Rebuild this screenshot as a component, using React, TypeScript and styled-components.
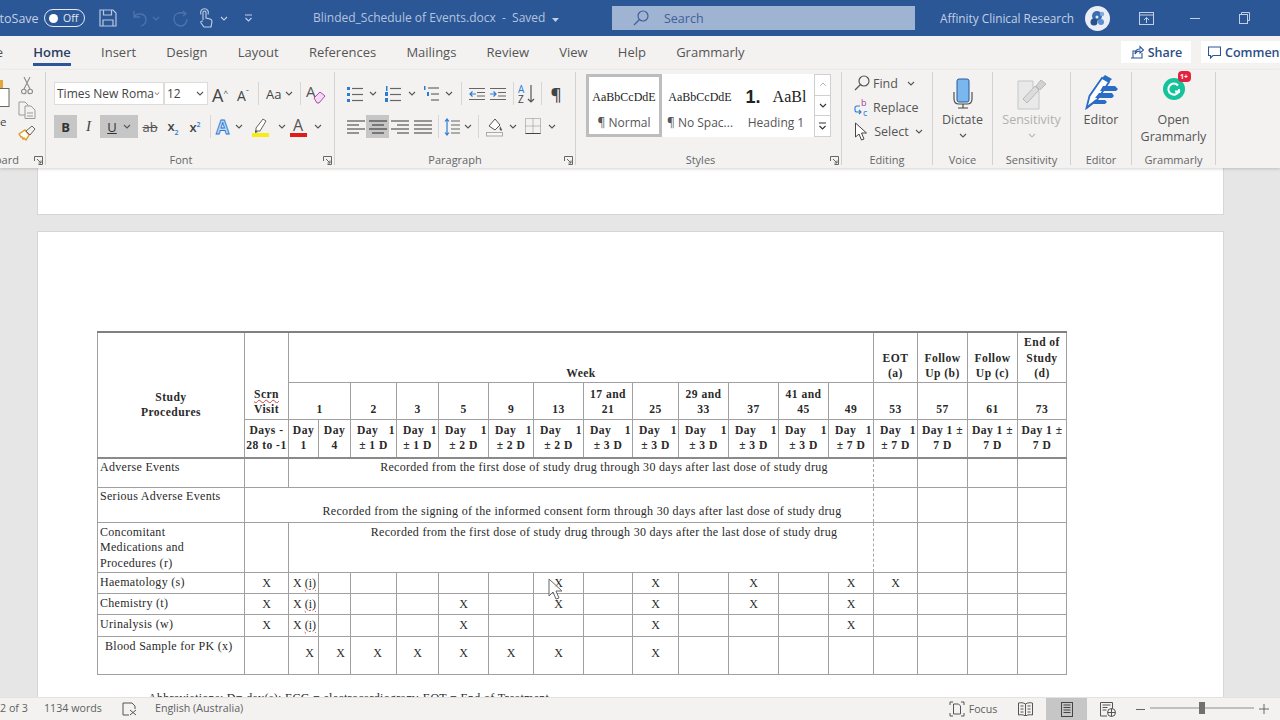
import styled, { createGlobalStyle } from "styled-components";

const ui = `"Open Sans", "Noto Sans", sans-serif`;
const serif = `"Liberation Serif", serif`;

const Global = createGlobalStyle`
  html, body { margin: 0; padding: 0; background: #e6e6e6; }
  #root { width: 1280px; height: 720px; overflow: hidden; }
`;

const Shell = styled.div`
  width: 1280px;
  height: 720px;
  display: flex;
  flex-direction: column;
  overflow: hidden;
  font-family: ${ui};
`;

/* title bar */
const TitleBar = styled.div`
  height: 36px;
  flex: none;
  background: #2b5797;
  color: #c3d0e4;
  display: flex;
  align-items: center;
  font-size: 12.5px;
`;
const AutoSave = styled.span`
  margin-left: -16px;
  width: 60px;
  flex: none;
`;
const Toggle = styled.div`
  width: 41px;
  height: 18px;
  box-sizing: border-box;
  border: 1px solid #e4eaf4;
  border-radius: 10px;
  display: flex;
  align-items: center;
  gap: 5px;
  padding-left: 4px;
  font-size: 10.5px;
  color: #e4eaf4;
  flex: none;
  &::before {
    content: "";
    width: 9px;
    height: 9px;
    border-radius: 50%;
    background: #fff;
  }
`;
const Qat = styled.div<{ $w: number }>`
  width: ${(p) => p.$w}px;
  flex: none;
  display: flex;
  justify-content: center;
  align-items: center;
`;
const DocTitle = styled.div`
  width: 299px;
  flex: none;
  font-size: 12px;
  color: #b4c4dc;
  white-space: pre;
  padding-bottom: 2px;
`;
const SearchBox = styled.div`
  width: 303px;
  height: 24px;
  flex: none;
  background: #9fb3d2;
  display: flex;
  align-items: center;
  gap: 15px;
  padding-left: 21px;
  box-sizing: border-box;
  color: #3f6199;
  font-size: 12.5px;
`;
const Account = styled.div`
  margin-left: 25px;
  width: 145px;
  flex: none;
  font-size: 11.8px;
  color: #c3d0e4;
  white-space: nowrap;
`;

/* tabs */
const TabRow = styled.div`
  height: 34px;
  flex: none;
  box-sizing: border-box;
  padding-bottom: 2px;
  background: #f3f2f1;
  display: flex;
  align-items: center;
`;
const Tabs = styled.div`
  display: flex;
  gap: 30.2px;
  margin-left: -17.5px;
  width: 1128.5px;
  flex: none;
`;
const Tab = styled.div<{ $on?: boolean }>`
  position: relative;
  font-size: 13px;
  line-height: 20px;
  color: ${(p) => (p.$on ? "#2b3f63" : "#555")};
  font-weight: ${(p) => (p.$on ? 600 : 400)};
  &::after {
    content: "";
    display: ${(p) => (p.$on ? "block" : "none")};
    position: absolute;
    left: 0;
    right: 0;
    bottom: -4px;
    height: 3px;
    background: #2b579a;
  }
`;
const ActionBtn = styled.div<{ $w: number }>`
  width: ${(p) => p.$w}px;
  height: 22px;
  flex: none;
  margin-left: 10px;
  background: #fff;
  display: flex;
  align-items: center;
  justify-content: center;
  gap: 4px;
  font-size: 12.5px;
  font-weight: 600;
  color: #2b4f86;
  white-space: nowrap;
  overflow: hidden;
`;
const CommentBtn = styled(ActionBtn)`
  justify-content: flex-start;
  padding-left: 7px;
  box-sizing: border-box;
`;

/* ribbon */
const Ribbon = styled.div`
  height: 98px;
  flex: none;
  box-sizing: border-box;
  padding: 2px 0 3px;
  background: #f3f2f1;
  display: flex;
  position: relative;
  z-index: 2;
  box-shadow: 0 1px 3px rgba(0, 0, 0, 0.18);
`;
const Group = styled.div<{ $w: number }>`
  width: ${(p) => p.$w}px;
  flex: none;
  box-sizing: border-box;
  border-right: 1px solid #d2d2d2;
  display: flex;
  flex-direction: column;
  position: relative;
`;
const GroupBody = styled.div`
  flex: 1;
  min-height: 0;
`;
const GroupLabel = styled.div<{ $shift?: number }>`
  height: 10px;
  line-height: 10px;
  font-size: 11px;
  text-align: center;
  color: #666;
  flex: none;
  padding-right: ${(p) => p.$shift ?? 0}px;
`;
const Launcher = styled.div`
  position: absolute;
  right: 2px;
  bottom: 0;
  width: 9px;
  height: 9px;
  line-height: 0;
`;
const Rows = styled.div<{ $left: number }>`
  display: flex;
  flex-direction: column;
  gap: 10px;
  padding: 10px 0 0 ${(p) => p.$left}px;
`;
const ToolRow = styled.div`
  display: flex;
  height: 23px;
  align-items: center;
`;
const Btn = styled.div<{ $w: number; $on?: boolean }>`
  width: ${(p) => p.$w}px;
  height: 23px;
  flex: none;
  display: flex;
  align-items: center;
  justify-content: center;
  background: ${(p) => (p.$on ? "#c6c6c6" : "transparent")};
  color: #444;
  font-size: 13px;
`;
const Divider = styled.div<{ $w: number }>`
  width: ${(p) => p.$w}px;
  height: 23px;
  flex: none;
  display: flex;
  justify-content: center;
  &::before {
    content: "";
    width: 1px;
    background: #d6d6d6;
  }
`;
const Combo = styled.div<{ $w: number }>`
  width: ${(p) => p.$w}px;
  height: 23px;
  box-sizing: border-box;
  flex: none;
  background: #fff;
  border: 1px solid #dcdcdc;
  display: flex;
  align-items: center;
  justify-content: space-between;
  padding: 0 3px 0 2px;
  font-size: 12px;
  color: #444;
  white-space: nowrap;
  overflow: hidden;
`;
const GlyphBold = styled.span`
  font-family: ${ui};
  font-weight: 700;
  font-size: 13px;
  color: #333;
`;
const GlyphItalic = styled.span`
  font-family: ${serif};
  font-style: italic;
  font-size: 15px;
  color: #444;
`;
const GlyphUnder = styled.span`
  text-decoration: underline;
  font-size: 13px;
  color: #333;
  margin-right: 6px;
`;
const GlyphStrike = styled.span`
  text-decoration: line-through;
  font-size: 13px;
  color: #555;
`;
const GlyphScript = styled.span`
  font-size: 13px;
  font-weight: 600;
  color: #444;
  & sub, & sup {
    font-size: 7px;
    color: #2b7cd3;
  }
`;
const GlyphBig = styled.span<{ $size: number }>`
  font-size: ${(p) => p.$size}px;
  color: #444;
  line-height: 20px;
  position: relative;
  & sup {
    font-size: 8px;
    vertical-align: 6px;
    color: #444;
  }
`;
const Pilcrow = styled.span`
  font-size: 17px;
  font-weight: 600;
  color: #444;
`;

/* clipboard stub */
const ClipColumn = styled.div`
  display: flex;
  height: 100%;
`;
const PasteStub = styled.div`
  width: 13px;
  flex: none;
  padding-top: 8px;
  font-size: 11.5px;
  line-height: 16px;
  color: #444;
  display: flex;
  flex-direction: column;
  gap: 7px;
`;
const ClipTools = styled.div`
  width: 28px;
  display: flex;
  flex-direction: column;
  align-items: center;
  gap: 6px;
  padding-top: 4px;
`;
const ClipLabel = styled.div`
  height: 10px;
  line-height: 10px;
  font-size: 11px;
  color: #666;
  margin-left: -31px;
  white-space: nowrap;
`;

/* styles */
const Gallery = styled.div`
  margin: 2px 0 0 10px;
  width: 245px;
  height: 63px;
  display: flex;
  background: #fff;
  box-sizing: border-box;
`;
const StyleItem = styled.div<{ $w: number; $on?: boolean }>`
  width: ${(p) => p.$w}px;
  flex: none;
  box-sizing: border-box;
  border: 3px solid ${(p) => (p.$on ? "#bdbdbd" : "transparent")};
  display: flex;
  flex-direction: column;
  align-items: center;
  overflow: hidden;
  white-space: nowrap;
`;
const StylePreview = styled.div`
  height: 38px;
  line-height: 40px;
  font-family: ${serif};
  font-size: 12px;
  color: #222;
`;
const HeadingPreview = styled(StylePreview)`
  display: flex;
  gap: 12px;
  font-size: 16px;
  & b {
    font-family: "Liberation Sans", sans-serif;
    font-size: 18px;
  }
`;
const StyleName = styled.div`
  font-size: 12px;
  color: #555;
  line-height: 16px;
`;
const GalleryScroll = styled.div`
  margin-left: auto;
  width: 17px;
  flex: none;
  display: flex;
  flex-direction: column;
  border: 1px solid #d0d0d0;
  box-sizing: border-box;
`;
const ScrollCell = styled.div`
  flex: 1;
  display: flex;
  align-items: center;
  justify-content: center;
  & + & {
    border-top: 1px solid #d0d0d0;
  }
`;

/* editing */
const EditList = styled.div`
  display: flex;
  flex-direction: column;
  padding: 0 0 0 12px;
  margin-top: -1px;
`;
const EditRow = styled.div`
  height: 24px;
  display: flex;
  align-items: center;
  gap: 3px;
  font-size: 12.5px;
  color: #555;
`;

/* large buttons */
const LargeBtn = styled.div<{ $dim?: boolean }>`
  display: flex;
  flex-direction: column;
  align-items: center;
  font-size: 12.5px;
  line-height: 17px;
  color: ${(p) => (p.$dim ? "#b0b0b0" : "#555")};
  text-align: center;
`;
const LargeIcon = styled.div`
  height: 38px;
  display: flex;
  align-items: flex-end;
  margin-bottom: 1px;
`;
const LargeChev = styled.div`
  line-height: 0;
  margin-top: 5px;
`;
const GrammarlyIcon = styled.div`
  position: relative;
  width: 22px;
  height: 22px;
  margin-bottom: 10px;
`;
const Badge = styled.span`
  position: absolute;
  top: -7px;
  right: -6px;
  width: 13px;
  height: 11px;
  border-radius: 4px;
  background: #e0243f;
  color: #fff;
  font-size: 7px;
  font-weight: 700;
  line-height: 11px;
  text-align: center;
`;

/* document */
const DocArea = styled.div`
  flex: 1;
  min-height: 0;
  overflow: hidden;
  background: #e6e6e6;
`;
const PageTail = styled.div`
  margin-left: 37px;
  width: 1187px;
  height: 47px;
  box-sizing: border-box;
  background: #fff;
  border: 1px solid #d6d6d6;
  border-top: none;
`;
const Page = styled.div`
  margin: 16px 0 0 37px;
  width: 1187px;
  height: 700px;
  box-sizing: border-box;
  padding: 99px 0 0 59px;
  background: #fff;
  border: 1px solid #d6d6d6;
  font-family: ${serif};
  color: #2a2a2a;
`;
const TableWrap = styled.div`
  position: relative;
  width: 969px;
`;
const Schedule = styled.table`
  width: 969px;
  table-layout: fixed;
  border-collapse: collapse;
  font-size: 12px;
  line-height: 15.5px;
  letter-spacing: 0.3px;
  border: 1px solid #969696;
  border-top: 2px solid #808080;
`;
const Row = styled.tr<{ $h: number }>`
  height: ${(p) => p.$h}px;
`;
const HeadCell = styled.th<{ $v?: string; $pb?: number; $pt?: number; $thick?: boolean }>`
  border: 1px solid #a0a0a0;
  padding: ${(p) => p.$pt ?? 0}px 1px ${(p) => p.$pb ?? 0}px;
  font-weight: 700;
  font-size: 11.6px;
  text-align: center;
  vertical-align: ${(p) => p.$v ?? "bottom"};
  letter-spacing: 0.45px;
  border-bottom: ${(p) => (p.$thick ? "2px solid #8a8a8a" : "1px solid #a0a0a0")};
`;
const DaySplit = styled.div`
  display: flex;
  justify-content: space-between;
  padding: 0 0 0 5px;
`;
const TextCell = styled.td<{ $pad?: number; $top?: number; $afterDash?: boolean }>`
  border: 1px solid #a0a0a0;
  ${(p) => (p.$afterDash ? "border-left: none;" : "")}
  padding: ${(p) => p.$top ?? 1}px 2px 0 ${(p) => p.$pad ?? 2}px;
  vertical-align: top;
`;
const SpanCell = styled.td<{ $v?: string; $pb?: number; $top?: number }>`
  border: 1px solid #a0a0a0;
  border-right: 1px dashed #a8a8a8;
  padding: ${(p) => p.$top ?? 1}px 0 ${(p) => p.$pb ?? 0}px 46px;
  text-align: center;
  vertical-align: ${(p) => p.$v ?? "top"};
`;
const Mark = styled.td<{ $shift?: number; $left?: boolean; $tall?: boolean }>`
  border: 1px solid #a0a0a0;
  padding: ${(p) => (p.$tall ? "0 0 2px" : "2px 0 0")} ${(p) => p.$shift ?? 0}px;
  padding-right: 0;
  text-align: ${(p) => (p.$left ? "left" : "center")};
  vertical-align: middle;
  white-space: nowrap;
  letter-spacing: 0;
`;
const Squiggle = styled.span`
  text-decoration: underline wavy #d04040;
  text-decoration-thickness: 1px;
`;
const Pointer = styled.svg`
  position: absolute;
  left: 451px;
  top: 247px;
`;
const Abbrev = styled.p`
  margin: 16px 0 0 51px;
  font-size: 12px;
  letter-spacing: 0.3px;
  white-space: nowrap;
`;

/* status bar */
const StatusBar = styled.div`
  height: 23px;
  flex: none;
  background: #f3f2f1;
  border-top: 1px solid #e2e2e2;
  box-sizing: border-box;
  position: relative;
  z-index: 2;
  display: flex;
  align-items: center;
  padding-bottom: 2px;
  font-size: 10.7px;
  color: #5f5f5f;
`;
const StatusText = styled.span<{ $w: number }>`
  width: ${(p) => p.$w}px;
  flex: none;
  white-space: nowrap;
`;
const StatusIcon = styled.div<{ $w: number; $on?: boolean }>`
  width: ${(p) => p.$w}px;
  height: 22px;
  flex: none;
  margin-bottom: -2px;
  display: flex;
  align-items: center;
  justify-content: center;
  gap: 4px;
  background: ${(p) => (p.$on ? "#c6c6c6" : "transparent")};
`;
const SliderTrack = styled.div`
  width: 104px;
  height: 2px;
  flex: none;
  background: #c0c0c0;
  position: relative;
  margin: 0 5px;
`;
const SliderThumb = styled.div`
  position: absolute;
  left: 49px;
  top: -5px;
  width: 6px;
  height: 12px;
  background: #707070;
`;

/* icons */
const Chev = ({ c = "#555" }: { c?: string }) => (
  <svg width="8" height="5" viewBox="0 0 8 5" fill="none">
    <path d="M1 1l3 3 3-3" stroke={c} strokeWidth="1.1" />
  </svg>
);

const Lines = ({ rows, c = "#555" }: { rows: [number, number, number][]; c?: string }) => (
  <svg width="20" height="18" viewBox="0 0 20 18" fill="none" stroke={c} strokeWidth="1.2">
    {rows.map(([a, b, y], i) => (
      <path key={i} d={`M${a} ${y}H${b}`} />
    ))}
  </svg>
);

const ListIcon = ({ kind }: { kind: "bullet" | "number" | "multi" }) => (
  <svg width="18" height="18" viewBox="0 0 18 18" fill="none">
    {kind === "bullet" && (
      <g fill="#2b7cd3">
        <rect x="1" y="2" width="3" height="3" />
        <rect x="1" y="8" width="3" height="3" />
        <rect x="1" y="14" width="3" height="3" />
      </g>
    )}
    {kind === "number" && (
      <g fill="#2b7cd3">
        <rect x="2" y="1" width="1.5" height="5" />
        <rect x="1" y="7" width="3" height="4" />
        <rect x="1" y="13" width="3" height="4" />
      </g>
    )}
    {kind === "multi" && (
      <g fill="#2b7cd3">
        <rect x="2" y="1" width="1.5" height="4" />
        <rect x="5" y="7" width="2" height="4" />
      </g>
    )}
    <g stroke="#666" strokeWidth="1.2">
      <path d={kind === "multi" ? "M6 3h11" : "M6 3.5h11"} />
      <path d={kind === "multi" ? "M9 9h8" : "M6 9.5h11"} />
      <path d={kind === "multi" ? "M9 15h8" : "M6 15.5h11"} />
    </g>
  </svg>
);

const IndentIcon = ({ out }: { out?: boolean }) => (
  <svg width="17" height="14" viewBox="0 0 17 14" fill="none">
    <g stroke="#666" strokeWidth="1.1">
      <path d="M0 1.5h16M8 5.5h8M8 9h8M0 12.5h16" />
    </g>
    <path d={out ? "M7 7H1M3.5 4.5L1 7l2.5 2.5" : "M0 7h6M3.5 4.5L6 7 3.5 9.5"} stroke="#2b7cd3" strokeWidth="1.2" />
  </svg>
);

const Launch = () => (
  <svg width="9" height="9" viewBox="0 0 9 9" fill="none" stroke="#666">
    <path d="M.5 5V.5H8.5V8.5H4.5" />
    <path d="M3 3l4 4M7 4.5V7H4.5" />
  </svg>
);

const SaveIcon = () => (
  <svg width="18" height="18" viewBox="0 0 18 18" fill="none" stroke="#b9c8e0" strokeWidth="1.2">
    <path d="M1 1h13l3 3v13H1z" />
    <path d="M4.5 1v5h8V1M4 17v-6h10v6" />
  </svg>
);
const UndoIcon = () => (
  <svg width="18" height="18" viewBox="0 0 18 18" fill="none" stroke="#4f73ab" strokeWidth="1.3">
    <path d="M3 2v6h6M3 8c3-5 12-4 12 3 0 3-2 5-5 6" />
  </svg>
);
const RedoIcon = () => (
  <svg width="17" height="18" viewBox="0 0 17 18" fill="none" stroke="#4f73ab" strokeWidth="1.3">
    <path d="M11 2l3 3-3 2" />
    <path d="M13 5C7 2 2 5 2 10s4 7 7 7 6-3 6-7" />
  </svg>
);
const TouchIcon = () => (
  <svg width="14" height="20" viewBox="0 0 14 20" fill="none" stroke="#c3d0e4" strokeWidth="1.1">
    <path d="M4 12V4.5a1.5 1.5 0 013 0V10l4 1c1.3.4 2 1 2 2.4L12 19H5l-3-4c-.8-1.4.6-2.6 2-1.6" />
    <path d="M2 6.5C.6 3 3 .8 5.5.8S10.400 3 9 6.500" />
  </svg>
);
const QatMore = ({ c = "#c3d0e4" }: { c?: string }) => (
  <svg width="9" height="8" viewBox="0 0 9 8" fill="none" stroke={c} strokeWidth="1.1">
    <path d="M1 1h7M1.500 4l3 3 3-3" />
  </svg>
);
const Caret = () => (
  <svg width="7" height="4" viewBox="0 0 7 4">
    <path d="M0 0h7L3.500 4z" fill="#c3d0e4" />
  </svg>
);
const Magnifier = ({ c, s = 16 }: { c: string; s?: number }) => (
  <svg width={s} height={s} viewBox="0 0 16 16" fill="none" stroke={c} strokeWidth="1.2">
    <circle cx="10" cy="6" r="5" />
    <path d="M6.500 9.500L1 15" />
  </svg>
);
const Avatar = () => (
  <svg width="25" height="25" viewBox="0 0 25 25">
    <circle cx="12.500" cy="12.500" r="12.500" fill="#e9eef6" />
    <circle cx="12" cy="10" r="5" fill="#3a6db0" />
    <circle cx="9" cy="16" r="3.500" fill="#27508f" />
    <circle cx="16" cy="16" r="3" fill="#5b8fce" />
    <circle cx="17" cy="8" r="2.200" fill="#7fa9dc" />
    <circle cx="12" cy="11" r="1.500" fill="#dfe8f4" />
  </svg>
);
const DisplayIcon = () => (
  <svg width="15" height="13" viewBox="0 0 15 13" fill="none" stroke="#c3d0e4">
    <rect x=".5" y=".5" width="14" height="12" />
    <path d="M.5 3h14M7.500 11V5.500M5 8l2.500-2.500L10 8" />
  </svg>
);
const RestoreIcon = () => (
  <svg width="11" height="12" viewBox="0 0 11 12" fill="none" stroke="#c3d0e4">
    <rect x=".5" y="2.500" width="8" height="9" />
    <path d="M2.500 2.500V.5h8v8H8.500" />
  </svg>
);
const ShareIcon = () => (
  <svg width="14" height="14" viewBox="0 0 14 14" fill="none" stroke="#2b579a" strokeWidth="1.1">
    <path d="M3 13V6h3M1 13h11V8" />
    <path d="M5 9c0-4 3-5 5-5V1.500L13.500 5 10 8V6c-2 0-4 1-5 3z" />
  </svg>
);
const CommentIcon = () => (
  <svg width="13" height="13" viewBox="0 0 13 13" fill="none" stroke="#2b579a" strokeWidth="1.1">
    <path d="M.5 1h12v8.500H5L2.500 12V9.500h-2z" />
  </svg>
);

const PasteIcon = () => (
  <svg width="10" height="27" viewBox="0 0 10 27">
    <rect x="0" y="0" width="3" height="8" fill="#e0a93c" />
    <rect x="-2" y="8.500" width="11" height="18" fill="#fff" stroke="#666" />
  </svg>
);
const CutIcon = () => (
  <svg width="12" height="19" viewBox="0 0 12 19" fill="none" stroke="#8a8a8a" strokeWidth="1.1">
    <path d="M3 1l6 12M9 1L3 13" />
    <circle cx="2.800" cy="15.500" r="2.300" />
    <circle cx="9.200" cy="15.500" r="2.300" />
  </svg>
);
const CopyIcon = () => (
  <svg width="18" height="18" viewBox="0 0 18 18" fill="none" stroke="#9a9a9a">
    <path d="M1 1h6l3 3v10H1z" />
    <path d="M7 5h6l4 4v8.500H7z" fill="#f3f2f1" />
    <path d="M9 12h6M9 15h6" />
  </svg>
);
const PainterIcon = () => (
  <svg width="18" height="16" viewBox="0 0 18 16">
    <path d="M1 9l6-4 4 5-3 5-2-2-1 1-1-2H3z" fill="#fff" stroke="#e39a25" strokeWidth="1.400" />
    <path d="M8 6l6-5 3 3-5 6z" fill="#f3f2f1" stroke="#666" />
  </svg>
);
const EraserIcon = () => (
  <svg width="22" height="22" viewBox="0 0 22 22" fill="none">
    <text x="1" y="14" fontFamily="Open Sans" fontSize="15" fill="#555">A</text>
    <path d="M9 15l6-6 5 4-6 7h-2z" fill="#f2dcf2" stroke="#b545b5" />
  </svg>
);
const TextEffect = () => (
  <svg width="18" height="18" viewBox="0 0 18 18">
    <text x="1" y="16" fontFamily="Open Sans" fontWeight="700" fontSize="19" fill="#bcd8f4" stroke="#2b7cd3" strokeWidth=".9">A</text>
  </svg>
);
const Highlighter = () => (
  <svg width="18" height="20" viewBox="0 0 18 20">
    <path d="M4 11l7-9 3 2-6 10H4z" fill="#fff" stroke="#666" />
    <path d="M3 13l3 2-3 1z" fill="#555" />
    <rect x="0" y="16" width="17" height="4" fill="#f7ec13" />
  </svg>
);
const FontColor = () => (
  <svg width="18" height="20" viewBox="0 0 18 20">
    <text x="3" y="14" fontFamily="Open Sans" fontSize="16" fill="#555">A</text>
    <rect x="0" y="16" width="17" height="4" fill="#e01b1b" />
  </svg>
);
const SortIcon = () => (
  <svg width="18" height="20" viewBox="0 0 18 20" fill="none">
    <text x="0" y="9" fontFamily="Open Sans" fontSize="10" fill="#2b7cd3">A</text>
    <text x="0" y="19" fontFamily="Open Sans" fontSize="10" fill="#444">Z</text>
    <path d="M13 1v17M10 15l3 3 3-3" stroke="#555" strokeWidth="1.2" />
  </svg>
);
const SpacingIcon = () => (
  <svg width="16" height="18" viewBox="0 0 16 18" fill="none">
    <path d="M7 3h9M7 7h9M7 11h9M7 15h9" stroke="#666" strokeWidth="1.1" />
    <path d="M3 1v16M1 3.500L3 1l2 2.500M1 14.500L3 17l2-2.500" stroke="#2b7cd3" strokeWidth="1.2" />
  </svg>
);
const ShadingIcon = () => (
  <svg width="18" height="20" viewBox="0 0 18 20" fill="none">
    <path d="M3 9l6-7 5 6-5 5z" stroke="#555" fill="#fff" />
    <path d="M14 9c1 2 2 3 2 4s-1 1-2 0 0-2 0-4z" fill="#555" />
    <rect x=".5" y="15.500" width="16" height="3.500" fill="#f6f6f6" stroke="#aaa" />
  </svg>
);
const BordersIcon = () => (
  <svg width="16" height="17" viewBox="0 0 16 17" fill="none" stroke="#888" strokeDasharray="1 1">
    <rect x=".5" y=".5" width="15" height="15" />
    <path d="M8 .5v15M.5 8h15" />
    <path d="M.5 15.500h15" stroke="#444" strokeDasharray="none" />
  </svg>
);
const ReplaceIcon = () => (
  <svg width="16" height="19" viewBox="0 0 16 19" fill="none">
    <text x="7" y="8" fontFamily="Open Sans" fontSize="9" fill="#a33ea3">b</text>
    <text x="9" y="18" fontFamily="Open Sans" fontSize="9" fill="#2b7cd3">c</text>
    <path d="M6 8H3a2 2 0 00-2 2v2a2 2 0 002 2h4M5 12l2 2-2 2" stroke="#2b7cd3" strokeWidth="1.100" />
  </svg>
);
const ArrowIcon = () => (
  <svg width="14" height="19" viewBox="0 0 14 19" fill="#fff" stroke="#444">
    <path d="M1.500 1v14l3.500-3 2.500 6 2.500-1-2.500-6h5z" />
  </svg>
);
const MicIcon = () => (
  <svg width="20" height="32" viewBox="0 0 20 32" fill="none">
    <rect x="4" y="1" width="12" height="23" rx="2" fill="#7ab7ee" stroke="#2b579a" />
    <path d="M1 14v7c0 3 2 5 5 5h8c3 0 5-2 5-5v-7M10 26v4M5 30h10" stroke="#444" strokeWidth="1.100" />
  </svg>
);
const SensitivityIcon = () => (
  <svg width="30" height="32" viewBox="0 0 30 32" fill="none">
    <path d="M1 3h15v7l6 3v18H1z" fill="#e9e9e9" stroke="#c6c6c6" />
    <path d="M6 21L18 8l4 4-12 13z" fill="#dcdcdc" stroke="#b8b8b8" />
    <path d="M19 8l5-6 5 4-6 6z" fill="#d2d2d2" stroke="#b8b8b8" />
  </svg>
);
const PenIcon = () => (
  <svg width="33" height="36" viewBox="0 0 33 36" fill="none">
    <path d="M1.500 34l3-12L17 4l7 4-12 18z" fill="#fff" stroke="#2b6cc4" strokeWidth="1.800" />
    <path d="M17 4l3-3 7 4-3 3z" fill="#2b6cc4" />
    <path d="M1.500 34l10-8" stroke="#2b6cc4" strokeWidth="1.800" />
    <path d="M18 12h12l3 3-2 2H15zM14 19h13l2 3-2 2H10zM11 26h9l2 2-2 2H7z" fill="#2b6cc4" />
  </svg>
);
const GrammarlyCircle = () => (
  <svg width="22" height="22" viewBox="0 0 22 22" fill="none">
    <circle cx="11" cy="11" r="11" fill="#15c39a" />
    <path d="M15 7.500a5.500 5.500 0 10.800 6H12" stroke="#fff" strokeWidth="2" />
    <path d="M16 15v-4" stroke="#fff" strokeWidth="2" />
  </svg>
);
const ProofIcon = () => (
  <svg width="15" height="14" viewBox="0 0 15 14" fill="none" stroke="#555">
    <path d="M7 13H1V1h9l3 3v3" />
    <path d="M8 8l6 5M14 8l-6 5" />
  </svg>
);
const FocusIcon = () => (
  <svg width="16" height="16" viewBox="0 0 16 16" fill="none" stroke="#555">
    <path d="M1 4V1h3M12 1h3v3M15 12v3h-3M4 15H1v-3" />
    <path d="M4.500 3h5l2 2v8h-7z" />
  </svg>
);
const ReadIcon = () => (
  <svg width="15" height="14" viewBox="0 0 15 14" fill="none" stroke="#555">
    <path d="M7.500 2C5 .5 3 .5.500 1v12c2.500-.5 4.500-.5 7 1 2.500-1.500 4.500-1.500 7-1V1c-2.500-.5-4.500-.5-7 1zM7.500 2v12" />
    <path d="M2.500 4h3M2.500 7h3M2.500 10h3M9.500 4h3M9.500 7h3M9.500 10h3" />
  </svg>
);
const PrintIcon = () => (
  <svg width="12" height="15" viewBox="0 0 12 15" fill="none" stroke="#444">
    <rect x=".5" y=".5" width="11" height="14" />
    <path d="M2.500 3h7M2.500 5.500h7M2.500 8h7M2.500 10.500h7" />
  </svg>
);
const WebIcon = () => (
  <svg width="16" height="15" viewBox="0 0 16 15" fill="none" stroke="#555">
    <path d="M7 14H.5V.5h12V7" />
    <path d="M2.500 3h8M2.500 5.500h5M2.500 8h4" />
    <circle cx="11.500" cy="10.500" r="4" fill="#f3f2f1" />
    <path d="M7.500 10.500h8M11.500 6.500v8" />
  </svg>
);

const columns = [147, 44, 30, 32, 46, 42, 50, 45, 50, 49, 46, 50, 50, 50, 45, 44, 50, 50, 49];

type MarkRow = {
  name: string;
  pad?: number;
  h: number;
  x: Record<number, number>;
  withI?: boolean;
  screening?: boolean;
};

const markRows: MarkRow[] = [
  { name: "Haematology (s)", h: 21, screening: true, withI: true, x: { 6: 0, 8: 0, 10: 0, 12: 0, 13: 0 } },
  { name: "Chemistry (t)", h: 21, screening: true, withI: true, x: { 4: 0, 6: 0, 8: 0, 10: 0, 12: 0 } },
  { name: "Urinalysis (w)", h: 22, screening: true, withI: true, x: { 4: 0, 8: 0, 12: 0 } },
  {
    name: "Blood Sample for PK (x)",
    pad: 7,
    h: 38,
    x: { 0: 12, 1: 12, 2: 8, 3: 0, 4: 0, 5: 0, 6: 0, 8: 0 },
  },
];

function DayHead({ value }: { value: string }) {
  return (
    <HeadCell $v="middle" $thick>
      <DaySplit>
        <span>Day</span>
        <span>1</span>
      </DaySplit>
      {value}
    </HeadCell>
  );
}

function TrailingCells() {
  return (
    <>
      <TextCell $afterDash />
      <TextCell />
      <TextCell />
      <TextCell />
    </>
  );
}

function TitleArea() {
  return (
    <TitleBar>
      <AutoSave>AutoSave</AutoSave>
      <Toggle>Off</Toggle>
      <Qat $w={14} />
      <Qat $w={18}><SaveIcon /></Qat>
      <Qat $w={14} />
      <Qat $w={18}><UndoIcon /></Qat>
      <Qat $w={14}><Chev c="#4f73ab" /></Qat>
      <Qat $w={8} />
      <Qat $w={18}><RedoIcon /></Qat>
      <Qat $w={10} />
      <Qat $w={14}><TouchIcon /></Qat>
      <Qat $w={22}><Chev c="#c3d0e4" /></Qat>
      <Qat $w={26}><QatMore /></Qat>
      <Qat $w={52} />
      <DocTitle>
        Blinded_Schedule of Events.docx  -  Saved  <Caret />
      </DocTitle>
      <SearchBox>
        <Magnifier c="#3f6199" />
        Search
      </SearchBox>
      <Account>Affinity Clinical Research</Account>
      <Avatar />
      <Qat $w={29} />
      <DisplayIcon />
      <Qat $w={36} />
      <Qat $w={10}><svg width="10" height="1"><rect width="10" height="1" fill="#c3d0e4" /></svg></Qat>
      <Qat $w={39} />
      <RestoreIcon />
    </TitleBar>
  );
}

function TabArea() {
  const tabs = ["File", "Home", "Insert", "Design", "Layout", "References", "Mailings", "Review", "View", "Help", "Grammarly"];
  return (
    <TabRow>
      <Tabs>
        {tabs.map((t) => (
          <Tab key={t} $on={t === "Home"}>{t}</Tab>
        ))}
      </Tabs>
      <ActionBtn $w={70}><ShareIcon />Share</ActionBtn>
      <CommentBtn $w={90}><CommentIcon />Comments</CommentBtn>
    </TabRow>
  );
}

function RibbonArea() {
  return (
    <Ribbon>
      <Group $w={46}>
        <GroupBody>
          <ClipColumn>
            <PasteStub>
              <PasteIcon />
              <span>e</span>
            </PasteStub>
            <ClipTools>
              <CutIcon />
              <CopyIcon />
              <PainterIcon />
            </ClipTools>
          </ClipColumn>
        </GroupBody>
        <ClipLabel>Clipboard</ClipLabel>
        <Launcher><Launch /></Launcher>
      </Group>

      <Group $w={289}>
        <GroupBody>
          <Rows $left={8}>
            <ToolRow>
              <Combo $w={110}>Times New Roma<Chev /></Combo>
              <Combo $w={44}>12<Chev /></Combo>
              <Btn $w={24}><GlyphBig $size={18}>A<sup>^</sup></GlyphBig></Btn>
              <Btn $w={22}><GlyphBig $size={14}>A<sup>ˇ</sup></GlyphBig></Btn>
              <Divider $w={9} />
              <Btn $w={33}>Aa&nbsp;<Chev /></Btn>
              <Divider $w={9} />
              <Btn $w={22}><EraserIcon /></Btn>
            </ToolRow>
            <ToolRow>
              <Btn $w={23} $on><GlyphBold>B</GlyphBold></Btn>
              <Btn $w={23}><GlyphItalic>I</GlyphItalic></Btn>
              <Btn $w={38} $on><GlyphUnder>U</GlyphUnder><Chev /></Btn>
              <Btn $w={24}><GlyphStrike>ab</GlyphStrike></Btn>
              <Btn $w={22}><GlyphScript>x<sub>2</sub></GlyphScript></Btn>
              <Btn $w={22}><GlyphScript>x<sup>2</sup></GlyphScript></Btn>
              <Divider $w={8} />
              <Btn $w={20}><TextEffect /></Btn>
              <Btn $w={10}><Chev /></Btn>
              <Btn $w={34}><Highlighter /></Btn>
              <Btn $w={8}><Chev /></Btn>
              <Btn $w={26}><FontColor /></Btn>
              <Btn $w={12}><Chev /></Btn>
            </ToolRow>
          </Rows>
        </GroupBody>
        <GroupLabel $shift={18}>Font</GroupLabel>
        <Launcher><Launch /></Launcher>
      </Group>

      <Group $w={241}>
        <GroupBody>
          <Rows $left={10}>
            <ToolRow>
              <Btn $w={20}><ListIcon kind="bullet" /></Btn>
              <Btn $w={16}><Chev /></Btn>
              <Btn $w={24}><ListIcon kind="number" /></Btn>
              <Btn $w={14}><Chev /></Btn>
              <Btn $w={24}><ListIcon kind="multi" /></Btn>
              <Btn $w={12}><Chev /></Btn>
              <Divider $w={12} />
              <Btn $w={20}><IndentIcon out /></Btn>
              <Btn $w={22}><IndentIcon /></Btn>
              <Divider $w={8} />
              <Btn $w={20}><SortIcon /></Btn>
              <Divider $w={8} />
              <Btn $w={22}><Pilcrow>¶</Pilcrow></Btn>
            </ToolRow>
            <ToolRow>
              <Btn $w={21}><Lines rows={[[1, 19, 3], [1, 13, 7], [1, 19, 11], [1, 13, 15]]} /></Btn>
              <Btn $w={23} $on><Lines rows={[[1, 19, 3], [4, 16, 7], [1, 19, 11], [4, 16, 15]]} c="#444" /></Btn>
              <Btn $w={22}><Lines rows={[[1, 19, 3], [7, 19, 7], [1, 19, 11], [7, 19, 15]]} /></Btn>
              <Btn $w={24}><Lines rows={[[1, 19, 3], [1, 19, 7], [1, 19, 11], [1, 19, 15]]} /></Btn>
              <Divider $w={6} />
              <Btn $w={21}><SpacingIcon /></Btn>
              <Btn $w={11}><Chev /></Btn>
              <Divider $w={10} />
              <Btn $w={23}><ShadingIcon /></Btn>
              <Btn $w={13}><Chev /></Btn>
              <Btn $w={27}><BordersIcon /></Btn>
              <Btn $w={12}><Chev /></Btn>
            </ToolRow>
          </Rows>
        </GroupBody>
        <GroupLabel>Paragraph</GroupLabel>
        <Launcher><Launch /></Launcher>
      </Group>

      <Group $w={266}>
        <GroupBody>
          <Gallery>
            <StyleItem $w={76} $on>
              <StylePreview>AaBbCcDdE</StylePreview>
              <StyleName>¶ Normal</StyleName>
            </StyleItem>
            <StyleItem $w={76}>
              <StylePreview>AaBbCcDdE</StylePreview>
              <StyleName>¶ No Spac...</StyleName>
            </StyleItem>
            <StyleItem $w={76}>
              <HeadingPreview><b>1.</b><span>AaBl</span></HeadingPreview>
              <StyleName>Heading 1</StyleName>
            </StyleItem>
            <GalleryScroll>
              <ScrollCell><svg width="8" height="5"><path d="M1 4l3-3 3 3" fill="none" stroke="#bbb" /></svg></ScrollCell>
              <ScrollCell><Chev c="#333" /></ScrollCell>
              <ScrollCell><QatMore c="#333" /></ScrollCell>
            </GalleryScroll>
          </Gallery>
        </GroupBody>
        <GroupLabel $shift={16}>Styles</GroupLabel>
        <Launcher><Launch /></Launcher>
      </Group>

      <Group $w={91}>
        <GroupBody>
          <EditList>
            <EditRow><Magnifier c="#555" s={16} />Find&nbsp;&nbsp;<Chev /></EditRow>
            <EditRow><ReplaceIcon />Replace</EditRow>
            <EditRow><ArrowIcon />&nbsp;Select&nbsp;<Chev /></EditRow>
          </EditList>
        </GroupBody>
        <GroupLabel>Editing</GroupLabel>
      </Group>

      <Group $w={60}>
        <GroupBody>
          <LargeBtn>
            <LargeIcon><MicIcon /></LargeIcon>
            Dictate
            <LargeChev><Chev /></LargeChev>
          </LargeBtn>
        </GroupBody>
        <GroupLabel>Voice</GroupLabel>
      </Group>

      <Group $w={78}>
        <GroupBody>
          <LargeBtn $dim>
            <LargeIcon><SensitivityIcon /></LargeIcon>
            Sensitivity
            <LargeChev><Chev c="#bbb" /></LargeChev>
          </LargeBtn>
        </GroupBody>
        <GroupLabel>Sensitivity</GroupLabel>
      </Group>

      <Group $w={61}>
        <GroupBody>
          <LargeBtn>
            <LargeIcon><PenIcon /></LargeIcon>
            Editor
          </LargeBtn>
        </GroupBody>
        <GroupLabel>Editor</GroupLabel>
      </Group>

      <Group $w={84}>
        <GroupBody>
          <LargeBtn>
            <LargeIcon>
              <GrammarlyIcon>
                <GrammarlyCircle />
                <Badge>1+</Badge>
              </GrammarlyIcon>
            </LargeIcon>
            Open
            <br />
            Grammarly
          </LargeBtn>
        </GroupBody>
        <GroupLabel>Grammarly</GroupLabel>
      </Group>
    </Ribbon>
  );
}

function ScheduleTable() {
  return (
    <Schedule>
      <colgroup>
        {columns.map((w, i) => (
          <col key={i} width={w} />
        ))}
      </colgroup>
      <thead>
        <Row $h={50}>
          <HeadCell rowSpan={3} $v="middle" $thick $pt={20}>Study<br />Procedures</HeadCell>
          <HeadCell rowSpan={2} $pb={1}><Squiggle>Scrn</Squiggle><br />Visit</HeadCell>
          <HeadCell colSpan={13}>Week</HeadCell>
          <HeadCell>EOT<br />(a)</HeadCell>
          <HeadCell>Follow<br />Up (b)</HeadCell>
          <HeadCell>Follow<br />Up (c)</HeadCell>
          <HeadCell>End of<br />Study<br />(d)</HeadCell>
        </Row>
        <Row $h={37}>
          <HeadCell colSpan={2} $pb={1}>1</HeadCell>
          <HeadCell $pb={1}>2</HeadCell>
          <HeadCell $pb={1}>3</HeadCell>
          <HeadCell $pb={1}>5</HeadCell>
          <HeadCell $pb={1}>9</HeadCell>
          <HeadCell $pb={1}>13</HeadCell>
          <HeadCell $pb={1}>17 and<br />21</HeadCell>
          <HeadCell $pb={1}>25</HeadCell>
          <HeadCell $pb={1}>29 and<br />33</HeadCell>
          <HeadCell $pb={1}>37</HeadCell>
          <HeadCell $pb={1}>41 and<br />45</HeadCell>
          <HeadCell $pb={1}>49</HeadCell>
          <HeadCell $pb={1}>53</HeadCell>
          <HeadCell $pb={1}>57</HeadCell>
          <HeadCell $pb={1}>61</HeadCell>
          <HeadCell $pb={1}>73</HeadCell>
        </Row>
        <Row $h={39}>
          <HeadCell $v="middle" $thick>Days -<br />28 to -1</HeadCell>
          <HeadCell $v="middle" $thick>Day<br />1</HeadCell>
          <HeadCell $v="middle" $thick>Day<br />4</HeadCell>
          <DayHead value="± 1 D" />
          <DayHead value="± 1 D" />
          <DayHead value="± 2 D" />
          <DayHead value="± 2 D" />
          <DayHead value="± 2 D" />
          <DayHead value="± 3 D" />
          <DayHead value="± 3 D" />
          <DayHead value="± 3 D" />
          <DayHead value="± 3 D" />
          <DayHead value="± 3 D" />
          <DayHead value="± 7 D" />
          <DayHead value="± 7 D" />
          <HeadCell $v="middle" $thick>Day 1 ±<br />7 D</HeadCell>
          <HeadCell $v="middle" $thick>Day 1 ±<br />7 D</HeadCell>
          <HeadCell $v="middle" $thick>Day 1 ±<br />7 D</HeadCell>
        </Row>
      </thead>
      <tbody>
        <Row $h={29}>
          <TextCell>Adverse Events</TextCell>
          <TextCell />
          <SpanCell colSpan={13}>Recorded from the first dose of study drug through 30 days after last dose of study drug</SpanCell>
          <TrailingCells />
        </Row>
        <Row $h={35}>
          <TextCell>Serious Adverse Events</TextCell>
          <SpanCell colSpan={14} $v="bottom" $pb={2} $top={0}>Recorded from the signing of the informed consent form through 30 days after last dose of study drug</SpanCell>
          <TrailingCells />
        </Row>
        <Row $h={50}>
          <TextCell $top={2}>Concomitant<br />Medications and<br />Procedures (r)</TextCell>
          <TextCell />
          <SpanCell colSpan={13} $top={2}>Recorded from the first dose of study drug through 30 days after the last dose of study drug</SpanCell>
          <TrailingCells />
        </Row>
        {markRows.map((r) => {
          const tall = r.h > 30;
          return (
            <Row key={r.name} $h={r.h}>
              <TextCell $pad={r.pad} $top={2}>{r.name}</TextCell>
              <Mark $tall={tall}>{r.screening ? "X" : ""}</Mark>
              {Array.from({ length: 17 }, (_, i) => {
                if (i === 0 && r.withI) {
                  return (
                    <Mark key={i} $left $shift={4}>X <Squiggle>(i)</Squiggle></Mark>
                  );
                }
                const shift = r.x[i];
                return (
                  <Mark key={i} $shift={shift} $tall={tall}>{shift === undefined ? "" : "X"}</Mark>
                );
              })}
            </Row>
          );
        })}
      </tbody>
    </Schedule>
  );
}

function StatusArea() {
  return (
    <StatusBar>
      <StatusText $w={44}>2 of 3</StatusText>
      <StatusText $w={76}>1134 words</StatusText>
      <StatusIcon $w={19}><ProofIcon /></StatusIcon>
      <StatusText $w={16} />
      <StatusText $w={790}>English (Australia)</StatusText>
      <StatusIcon $w={56}><FocusIcon />Focus</StatusIcon>
      <StatusText $w={14} />
      <StatusIcon $w={20}><ReadIcon /></StatusIcon>
      <StatusText $w={11} />
      <StatusIcon $w={41} $on><PrintIcon /></StatusIcon>
      <StatusText $w={11} />
      <StatusIcon $w={20}><WebIcon /></StatusIcon>
      <StatusText $w={17} />
      <StatusIcon $w={10}><svg width="9" height="1"><rect width="9" height="1" fill="#666" /></svg></StatusIcon>
      <SliderTrack><SliderThumb /></SliderTrack>
      <StatusIcon $w={10}>
        <svg width="10" height="10"><path d="M5 0v10M0 5h10" stroke="#666" /></svg>
      </StatusIcon>
    </StatusBar>
  );
}

export default function App() {
  return (
    <Shell>
      <Global />
      <TitleArea />
      <TabArea />
      <RibbonArea />
      <DocArea>
        <PageTail />
        <Page>
          <TableWrap>
            <ScheduleTable />
            <Pointer width="15" height="22" viewBox="0 0 15 22">
              <path d="M1 1v17l4-4 3 7 3-1-3-7h6z" fill="rgba(255,255,255,.8)" stroke="#666" />
            </Pointer>
          </TableWrap>
          <Abbrev>Abbreviations: D= day(s); ECG = electrocardiogram; EOT = End of Treatment</Abbrev>
        </Page>
      </DocArea>
      <StatusArea />
    </Shell>
  );
}
